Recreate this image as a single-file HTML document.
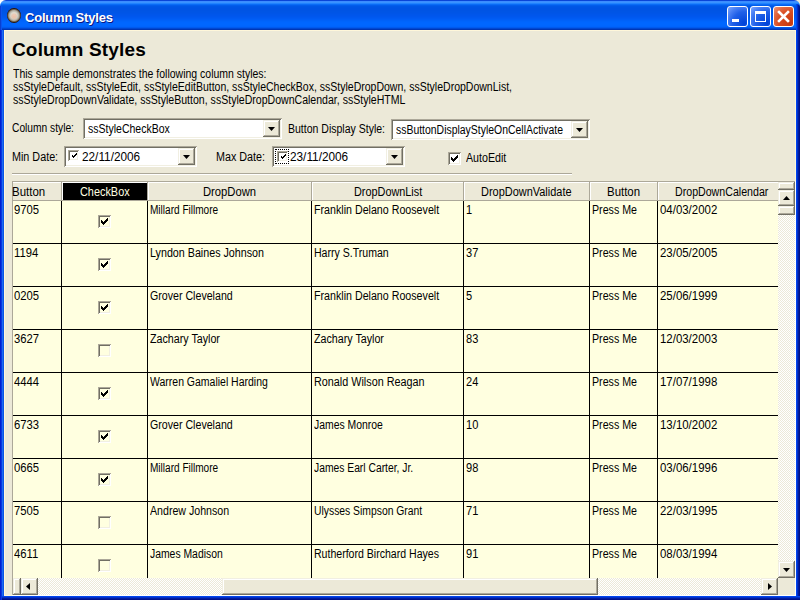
<!DOCTYPE html>
<html><head><meta charset="utf-8"><style>
html,body{margin:0;padding:0;}
body{width:800px;height:600px;position:relative;overflow:hidden;background:#fff;font-family:"Liberation Sans",sans-serif;}
body div,body svg{position:absolute;}
.t{font-size:12px;line-height:14px;white-space:nowrap;color:#000;transform-origin:0 0;}
.h1{font-size:19px;font-weight:bold;line-height:22px;white-space:nowrap;letter-spacing:0.15px;}
.title{left:0;top:0;width:800px;height:30px;border-radius:6px 6px 0 0;background:linear-gradient(to bottom,#0A45D8 0px,#0A45D8 1px,#3C8CFF 1px,#3C8CFF 2px,#3A93FF 2px,#3A93FF 3px,#2283FF 3px,#2283FF 4px,#0A6CF6 4px,#0A6CF6 5px,#025DEC 5px,#025DEC 6px,#0057E6 6px,#0057E6 7px,#0055E5 7px,#0055E5 8px,#0054E4 8px,#0054E4 9px,#0054E4 9px,#0054E4 10px,#0054E4 10px,#0054E4 11px,#0055E5 11px,#0055E5 12px,#0055E6 12px,#0055E6 13px,#0055E8 13px,#0055E8 14px,#0056EA 14px,#0056EA 15px,#0056EC 15px,#0056EC 16px,#0057EE 16px,#0057EE 17px,#0059F0 17px,#0059F0 18px,#005BF3 18px,#005BF3 19px,#005EF6 19px,#005EF6 20px,#0062F9 20px,#0062F9 21px,#0065FC 21px,#0065FC 22px,#0066FF 22px,#0066FF 23px,#0067FF 23px,#0067FF 24px,#0067FF 24px,#0067FF 25px,#0066FF 25px,#0066FF 26px,#0064FC 26px,#0064FC 27px,#005AEE 27px,#005AEE 28px,#0048D2 28px,#0048D2 29px,#0036B4 29px,#0036B4 30px);}
.ttl{left:25px;top:10px;font-size:13px;font-weight:bold;color:#fff;white-space:nowrap;line-height:16px;letter-spacing:-0.2px;}
.ttl.sh{left:26px;top:11px;color:#0A1883;}
.icon{left:7px;top:8px;width:14px;height:15px;border-radius:50%;background:radial-gradient(circle closest-side at 50% 55%,rgba(240,150,110,.5) 0,rgba(240,150,110,.3) 35%,rgba(255,255,255,0) 50%),radial-gradient(circle closest-side at 50% 50%,#f2f0e6 0,#dcd8cc 45%,#aeaa9e 72%,#6a5a48 88%,#2a1408 100%);}
.tb{width:21px;height:21px;box-sizing:border-box;border:1px solid #fff;border-radius:3px;background:radial-gradient(circle at 85% 85%,#0043D8 0%,#2060E8 50%,#4A80F4 75%,#7FA8FF 100%);}
.tb.close{background:radial-gradient(circle at 85% 85%,#C83A10 0%,#D84C20 50%,#E36A44 75%,#F09878 100%);}
.b3{box-sizing:border-box;background:#ECE9D8;box-shadow:inset -1px -1px #716F64,inset 1px 1px #F1EFE2,inset -2px -2px #ACA899,inset 2px 2px #fff;}
.sk{box-sizing:border-box;box-shadow:inset 1px 1px #ACA899,inset -1px -1px #fff,inset 2px 2px #716F64,inset -2px -2px #F1EFE2;}
.cb{width:13px;height:13px;box-sizing:border-box;background:#fff;box-shadow:inset 1px 1px #ACA899,inset -1px -1px #fff,inset 2px 2px #716F64,inset -2px -2px #F1EFE2;}
.cb.sm{width:11px;height:11px;}
</style></head><body>
<div style="left:0px;top:0px;width:800px;height:30px;background:#ECE9D8"></div>
<div style="left:0px;top:0px;width:8px;height:8px;background:#fff"></div>
<div class="title"></div>
<div style="left:0px;top:6px;width:2px;height:24px;background:linear-gradient(90deg,#0A3FD0 0,#0A3FD0 1px,#0A55F0 1px)"></div>
<div style="left:0px;top:30px;width:4px;height:570px;background:linear-gradient(90deg,#0020D0 0,#0020D0 1px,#0838E0 1px,#0838E0 2px,#1C6AF2 2px,#1C6AF2 3px,#0A55E5 3px)"></div>
<div style="left:796px;top:4px;width:4px;height:596px;border-top-right-radius:4px;background:linear-gradient(90deg,#0044F0 0,#0044F0 1px,#0030C8 1px,#0030C8 2px,#001CA0 2px,#001CA0 3px,#001088 3px)"></div>
<div style="left:2px;top:596px;width:798px;height:4px;background:linear-gradient(180deg,#0044EE 0,#0044EE 1px,#0030C8 1px,#0030C8 2px,#001CA0 2px,#001CA0 3px,#001088 3px)"></div>
<div style="left:4px;top:30px;width:792px;height:566px;background:#FFF7DA"></div>
<div style="left:5px;top:31px;width:790px;height:564px;background:#ECE9D8"></div>
<div class="icon"></div>
<div class="ttl sh">Column Styles</div><div class="ttl">Column Styles</div>
<div class="tb" style="left:727px;top:6px"></div>
<div class="tb" style="left:750px;top:6px"></div>
<div class="tb close" style="left:773px;top:6px"></div>
<div style="left:732px;top:19px;width:7px;height:3px;background:#fff"></div>
<div style="left:755px;top:11px;width:11px;height:11px;box-sizing:border-box;border:1px solid #fff;border-top-width:3px"></div>
<svg style="left:777px;top:10px" width="13" height="13"><path d="M2 2 L11 11 M11 2 L2 11" stroke="#fff" stroke-width="2.6" stroke-linecap="square"/></svg>
<div class="h1" style="left:12px;top:39px">Column Styles</div>
<div class="t" style="left:13.0px;top:67px;transform:scaleX(0.8737);">This sample demonstrates the following column styles:</div>
<div class="t" style="left:13.0px;top:80px;transform:scaleX(0.8761);">ssStyleDefault, ssStyleEdit, ssStyleEditButton, ssStyleCheckBox, ssStyleDropDown, ssStyleDropDownList,</div>
<div class="t" style="left:13.0px;top:93px;transform:scaleX(0.88);">ssStyleDropDownValidate, ssStyleButton, ssStyleDropDownCalendar, ssStyleHTML</div>
<div class="t" style="left:12.15px;top:121px;transform:scaleX(0.8521);">Column style:</div>
<div class="sk" style="left:83px;top:118px;width:199px;height:21px;background:#fff"></div>
<div class="t" style="left:88.0px;top:122px;transform:scaleX(0.8763);">ssStyleCheckBox</div>
<div class="b3" style="left:263px;top:120px;width:17px;height:17px"></div>
<svg style="left:268px;top:127px" width="7" height="4"><polygon points="0,0 7,0 3.5,4" fill="#000"/></svg>
<div class="t" style="left:288.12px;top:122px;transform:scaleX(0.8761);">Button Display Style:</div>
<div class="sk" style="left:391px;top:119px;width:199px;height:21px;background:#fff"></div>
<div class="t" style="left:396.0px;top:123px;transform:scaleX(0.8698);">ssButtonDisplayStyleOnCellActivate</div>
<div class="b3" style="left:571px;top:121px;width:17px;height:17px"></div>
<svg style="left:576px;top:128px" width="7" height="4"><polygon points="0,0 7,0 3.5,4" fill="#000"/></svg>
<div class="t" style="left:12.1px;top:150px;transform:scaleX(0.898);">Min Date:</div>
<div class="sk" style="left:64px;top:146px;width:133px;height:21px;background:#fff"></div>
<div class="cb sm" style="left:68px;top:150px"></div>
<svg style="left:72px;top:153px" width="5" height="5" shape-rendering="crispEdges"><rect x="0" y="2" width="1" height="2"/><rect x="1" y="3" width="1" height="2"/><rect x="2" y="2" width="1" height="2"/><rect x="3" y="1" width="1" height="2"/><rect x="4" y="0" width="1" height="2"/></svg>
<div class="t" style="left:82.02px;top:150px;transform:scaleX(0.9828);">22/11/2006</div>
<div class="b3" style="left:178px;top:148px;width:17px;height:17px"></div>
<svg style="left:183px;top:155px" width="7" height="4"><polygon points="0,0 7,0 3.5,4" fill="#000"/></svg>
<div class="t" style="left:216.1px;top:150px;transform:scaleX(0.8962);">Max Date:</div>
<div class="sk" style="left:272px;top:146px;width:133px;height:21px;background:#fff"></div>
<div class="cb sm" style="left:277px;top:151px"></div>
<svg style="left:281px;top:154px" width="5" height="5" shape-rendering="crispEdges"><rect x="0" y="2" width="1" height="2"/><rect x="1" y="3" width="1" height="2"/><rect x="2" y="2" width="1" height="2"/><rect x="3" y="1" width="1" height="2"/><rect x="4" y="0" width="1" height="2"/></svg>
<div style="left:275px;top:149px;width:14px;height:15px;box-sizing:border-box;border:1px dotted #000"></div>
<div class="t" style="left:290.02px;top:150px;transform:scaleX(0.983);">23/11/2006</div>
<div class="b3" style="left:386px;top:148px;width:17px;height:17px"></div>
<svg style="left:391px;top:155px" width="7" height="4"><polygon points="0,0 7,0 3.5,4" fill="#000"/></svg>
<div class="cb" style="left:448px;top:152px;"></div>
<svg style="left:451px;top:155px" width="7" height="7" shape-rendering="crispEdges"><rect x="0" y="2" width="1" height="3"/><rect x="1" y="3" width="1" height="3"/><rect x="2" y="4" width="1" height="3"/><rect x="3" y="3" width="1" height="3"/><rect x="4" y="2" width="1" height="3"/><rect x="5" y="1" width="1" height="3"/><rect x="6" y="0" width="1" height="3"/></svg>
<div class="t" style="left:466.0px;top:151px;transform:scaleX(0.8889);">AutoEdit</div>
<div style="left:12px;top:173px;width:560px;height:1px;background:#ACA899"></div>
<div style="left:12px;top:174px;width:560px;height:1px;background:#fff"></div>
<div style="left:12px;top:181px;width:784px;height:1px;background:#ACA899"></div>
<div style="left:12px;top:181px;width:1px;height:415px;background:#ACA899"></div>
<div style="left:795px;top:181px;width:1px;height:415px;background:#fff"></div>
<div style="left:12px;top:595px;width:784px;height:1px;background:#fff"></div>
<div style="left:13px;top:182px;width:782px;height:413px;background:#FFFFE0"></div>
<div style="left:13px;top:182px;width:765px;height:19px;background:#ECE9D8"></div>
<div style="left:13px;top:182px;width:765px;height:1px;background:#fff"></div>
<div style="left:13px;top:200px;width:765px;height:1px;background:#ACA899"></div>
<div style="left:61px;top:182px;width:1px;height:19px;background:#ACA899"></div>
<div style="left:62px;top:182px;width:1px;height:18px;background:#fff"></div>
<div style="left:147px;top:182px;width:1px;height:19px;background:#ACA899"></div>
<div style="left:148px;top:182px;width:1px;height:18px;background:#fff"></div>
<div style="left:311px;top:182px;width:1px;height:19px;background:#ACA899"></div>
<div style="left:312px;top:182px;width:1px;height:18px;background:#fff"></div>
<div style="left:463px;top:182px;width:1px;height:19px;background:#ACA899"></div>
<div style="left:464px;top:182px;width:1px;height:18px;background:#fff"></div>
<div style="left:589px;top:182px;width:1px;height:19px;background:#ACA899"></div>
<div style="left:590px;top:182px;width:1px;height:18px;background:#fff"></div>
<div style="left:657px;top:182px;width:1px;height:19px;background:#ACA899"></div>
<div style="left:658px;top:182px;width:1px;height:18px;background:#fff"></div>
<div style="left:63px;top:183px;width:84px;height:17px;background:#000"></div>
<div class="t" style="left:12.04px;top:185px;transform:scaleX(0.955);">Button</div>
<div class="t" style="left:80.09px;top:185px;transform:scaleX(0.9074);color:#FFFFE0;">CheckBox</div>
<div class="t" style="left:203.06px;top:185px;transform:scaleX(0.9364);">DropDown</div>
<div class="t" style="left:354.09px;top:185px;transform:scaleX(0.9054);">DropDownList</div>
<div class="t" style="left:481.09px;top:185px;transform:scaleX(0.9133);">DropDownValidate</div>
<div class="t" style="left:607.05px;top:185px;transform:scaleX(0.9545);">Button</div>
<div class="t" style="left:675.11px;top:185px;transform:scaleX(0.8857);">DropDownCalendar</div>
<div style="left:13px;top:243px;width:765px;height:1px;background:#000"></div>
<div class="t" style="left:14px;top:203px;transform:scaleX(0.94);">9705</div>
<div class="t" style="left:150px;top:203px;transform:scaleX(0.8375);">Millard Fillmore</div>
<div class="t" style="left:314px;top:203px;transform:scaleX(0.8893);">Franklin Delano Roosevelt</div>
<div class="t" style="left:466px;top:203px;transform:scaleX(0.92);">1</div>
<div class="t" style="left:592px;top:203px;transform:scaleX(0.8878);">Press Me</div>
<div class="t" style="left:660px;top:203px;transform:scaleX(0.953);">04/03/2002</div>
<div class="cb" style="left:98px;top:215px;background:#FFFFE0"></div>
<svg style="left:101px;top:218px" width="7" height="7" shape-rendering="crispEdges"><rect x="0" y="2" width="1" height="3"/><rect x="1" y="3" width="1" height="3"/><rect x="2" y="4" width="1" height="3"/><rect x="3" y="3" width="1" height="3"/><rect x="4" y="2" width="1" height="3"/><rect x="5" y="1" width="1" height="3"/><rect x="6" y="0" width="1" height="3"/></svg>
<div style="left:13px;top:286px;width:765px;height:1px;background:#000"></div>
<div class="t" style="left:14px;top:246px;transform:scaleX(0.94);">1194</div>
<div class="t" style="left:150px;top:246px;transform:scaleX(0.8929);">Lyndon Baines Johnson</div>
<div class="t" style="left:314px;top:246px;transform:scaleX(0.8795);">Harry S.Truman</div>
<div class="t" style="left:466px;top:246px;transform:scaleX(0.92);">37</div>
<div class="t" style="left:592px;top:246px;transform:scaleX(0.8878);">Press Me</div>
<div class="t" style="left:660px;top:246px;transform:scaleX(0.953);">23/05/2005</div>
<div class="cb" style="left:98px;top:258px;background:#FFFFE0"></div>
<svg style="left:101px;top:261px" width="7" height="7" shape-rendering="crispEdges"><rect x="0" y="2" width="1" height="3"/><rect x="1" y="3" width="1" height="3"/><rect x="2" y="4" width="1" height="3"/><rect x="3" y="3" width="1" height="3"/><rect x="4" y="2" width="1" height="3"/><rect x="5" y="1" width="1" height="3"/><rect x="6" y="0" width="1" height="3"/></svg>
<div style="left:13px;top:329px;width:765px;height:1px;background:#000"></div>
<div class="t" style="left:14px;top:289px;transform:scaleX(0.94);">0205</div>
<div class="t" style="left:150px;top:289px;transform:scaleX(0.8859);">Grover Cleveland</div>
<div class="t" style="left:314px;top:289px;transform:scaleX(0.8893);">Franklin Delano Roosevelt</div>
<div class="t" style="left:466px;top:289px;transform:scaleX(0.92);">5</div>
<div class="t" style="left:592px;top:289px;transform:scaleX(0.8878);">Press Me</div>
<div class="t" style="left:660px;top:289px;transform:scaleX(0.953);">25/06/1999</div>
<div class="cb" style="left:98px;top:301px;background:#FFFFE0"></div>
<svg style="left:101px;top:304px" width="7" height="7" shape-rendering="crispEdges"><rect x="0" y="2" width="1" height="3"/><rect x="1" y="3" width="1" height="3"/><rect x="2" y="4" width="1" height="3"/><rect x="3" y="3" width="1" height="3"/><rect x="4" y="2" width="1" height="3"/><rect x="5" y="1" width="1" height="3"/><rect x="6" y="0" width="1" height="3"/></svg>
<div style="left:13px;top:372px;width:765px;height:1px;background:#000"></div>
<div class="t" style="left:14px;top:332px;transform:scaleX(0.94);">3627</div>
<div class="t" style="left:150px;top:332px;transform:scaleX(0.8911);">Zachary Taylor</div>
<div class="t" style="left:314px;top:332px;transform:scaleX(0.8911);">Zachary Taylor</div>
<div class="t" style="left:466px;top:332px;transform:scaleX(0.92);">83</div>
<div class="t" style="left:592px;top:332px;transform:scaleX(0.8878);">Press Me</div>
<div class="t" style="left:660px;top:332px;transform:scaleX(0.953);">12/03/2003</div>
<div class="cb" style="left:98px;top:344px;background:#FFFFE0"></div>
<div style="left:13px;top:415px;width:765px;height:1px;background:#000"></div>
<div class="t" style="left:14px;top:375px;transform:scaleX(0.94);">4444</div>
<div class="t" style="left:150px;top:375px;transform:scaleX(0.8731);">Warren Gamaliel Harding</div>
<div class="t" style="left:314px;top:375px;transform:scaleX(0.9008);">Ronald Wilson Reagan</div>
<div class="t" style="left:466px;top:375px;transform:scaleX(0.92);">24</div>
<div class="t" style="left:592px;top:375px;transform:scaleX(0.8878);">Press Me</div>
<div class="t" style="left:660px;top:375px;transform:scaleX(0.953);">17/07/1998</div>
<div class="cb" style="left:98px;top:387px;background:#FFFFE0"></div>
<svg style="left:101px;top:390px" width="7" height="7" shape-rendering="crispEdges"><rect x="0" y="2" width="1" height="3"/><rect x="1" y="3" width="1" height="3"/><rect x="2" y="4" width="1" height="3"/><rect x="3" y="3" width="1" height="3"/><rect x="4" y="2" width="1" height="3"/><rect x="5" y="1" width="1" height="3"/><rect x="6" y="0" width="1" height="3"/></svg>
<div style="left:13px;top:458px;width:765px;height:1px;background:#000"></div>
<div class="t" style="left:14px;top:418px;transform:scaleX(0.94);">6733</div>
<div class="t" style="left:150px;top:418px;transform:scaleX(0.8859);">Grover Cleveland</div>
<div class="t" style="left:314px;top:418px;transform:scaleX(0.8671);">James Monroe</div>
<div class="t" style="left:466px;top:418px;transform:scaleX(0.92);">10</div>
<div class="t" style="left:592px;top:418px;transform:scaleX(0.8878);">Press Me</div>
<div class="t" style="left:660px;top:418px;transform:scaleX(0.953);">13/10/2002</div>
<div class="cb" style="left:98px;top:430px;background:#FFFFE0"></div>
<svg style="left:101px;top:433px" width="7" height="7" shape-rendering="crispEdges"><rect x="0" y="2" width="1" height="3"/><rect x="1" y="3" width="1" height="3"/><rect x="2" y="4" width="1" height="3"/><rect x="3" y="3" width="1" height="3"/><rect x="4" y="2" width="1" height="3"/><rect x="5" y="1" width="1" height="3"/><rect x="6" y="0" width="1" height="3"/></svg>
<div style="left:13px;top:501px;width:765px;height:1px;background:#000"></div>
<div class="t" style="left:14px;top:461px;transform:scaleX(0.94);">0665</div>
<div class="t" style="left:150px;top:461px;transform:scaleX(0.8375);">Millard Fillmore</div>
<div class="t" style="left:314px;top:461px;transform:scaleX(0.8596);">James Earl Carter, Jr.</div>
<div class="t" style="left:466px;top:461px;transform:scaleX(0.92);">98</div>
<div class="t" style="left:592px;top:461px;transform:scaleX(0.8878);">Press Me</div>
<div class="t" style="left:660px;top:461px;transform:scaleX(0.953);">03/06/1996</div>
<div class="cb" style="left:98px;top:473px;background:#FFFFE0"></div>
<svg style="left:101px;top:476px" width="7" height="7" shape-rendering="crispEdges"><rect x="0" y="2" width="1" height="3"/><rect x="1" y="3" width="1" height="3"/><rect x="2" y="4" width="1" height="3"/><rect x="3" y="3" width="1" height="3"/><rect x="4" y="2" width="1" height="3"/><rect x="5" y="1" width="1" height="3"/><rect x="6" y="0" width="1" height="3"/></svg>
<div style="left:13px;top:544px;width:765px;height:1px;background:#000"></div>
<div class="t" style="left:14px;top:504px;transform:scaleX(0.94);">7505</div>
<div class="t" style="left:150px;top:504px;transform:scaleX(0.8843);">Andrew Johnson</div>
<div class="t" style="left:314px;top:504px;transform:scaleX(0.8629);">Ulysses Simpson Grant</div>
<div class="t" style="left:466px;top:504px;transform:scaleX(0.92);">71</div>
<div class="t" style="left:592px;top:504px;transform:scaleX(0.8878);">Press Me</div>
<div class="t" style="left:660px;top:504px;transform:scaleX(0.953);">22/03/1995</div>
<div class="cb" style="left:98px;top:516px;background:#FFFFE0"></div>
<div class="t" style="left:14px;top:547px;transform:scaleX(0.94);">4611</div>
<div class="t" style="left:150px;top:547px;transform:scaleX(0.8651);">James Madison</div>
<div class="t" style="left:314px;top:547px;transform:scaleX(0.8794);">Rutherford Birchard Hayes</div>
<div class="t" style="left:466px;top:547px;transform:scaleX(0.92);">91</div>
<div class="t" style="left:592px;top:547px;transform:scaleX(0.8878);">Press Me</div>
<div class="t" style="left:660px;top:547px;transform:scaleX(0.953);">08/03/1994</div>
<div class="cb" style="left:98px;top:559px;background:#FFFFE0"></div>
<div style="left:61px;top:201px;width:1px;height:377px;background:#000"></div>
<div style="left:147px;top:201px;width:1px;height:377px;background:#000"></div>
<div style="left:311px;top:201px;width:1px;height:377px;background:#000"></div>
<div style="left:463px;top:201px;width:1px;height:377px;background:#000"></div>
<div style="left:589px;top:201px;width:1px;height:377px;background:#000"></div>
<div style="left:657px;top:201px;width:1px;height:377px;background:#000"></div>
<div style="left:778px;top:182px;width:17px;height:396px;background:repeating-conic-gradient(#fff 0 25%, #ECE9D8 0 50%) 0 0/2px 2px"></div>
<div style="left:13px;top:578px;width:765px;height:17px;background:repeating-conic-gradient(#fff 0 25%, #ECE9D8 0 50%) 0 0/2px 2px"></div>
<div style="left:778px;top:578px;width:17px;height:17px;background:#ECE9D8"></div>
<div class="b3" style="left:778px;top:182px;width:17px;height:8px"></div>
<div class="b3" style="left:778px;top:190px;width:17px;height:16px"></div>
<svg style="left:783px;top:196px" width="7" height="4"><polygon points="0,4 7,4 3.5,0" fill="#000"/></svg>
<div class="b3" style="left:778px;top:206px;width:17px;height:9px"></div>
<div class="b3" style="left:778px;top:561px;width:17px;height:17px"></div>
<svg style="left:783px;top:568px" width="7" height="4"><polygon points="0,0 7,0 3.5,4" fill="#000"/></svg>
<div class="b3" style="left:13px;top:578px;width:8px;height:17px"></div>
<div class="b3" style="left:21px;top:578px;width:17px;height:17px"></div>
<svg style="left:26px;top:583px" width="4" height="7"><polygon points="4,0 4,7 0,3.5" fill="#000"/></svg>
<div class="b3" style="left:222px;top:578px;width:376px;height:17px"></div>
<div class="b3" style="left:761px;top:578px;width:17px;height:17px"></div>
<svg style="left:768px;top:583px" width="4" height="7"><polygon points="0,0 0,7 4,3.5" fill="#000"/></svg>
</body></html>
